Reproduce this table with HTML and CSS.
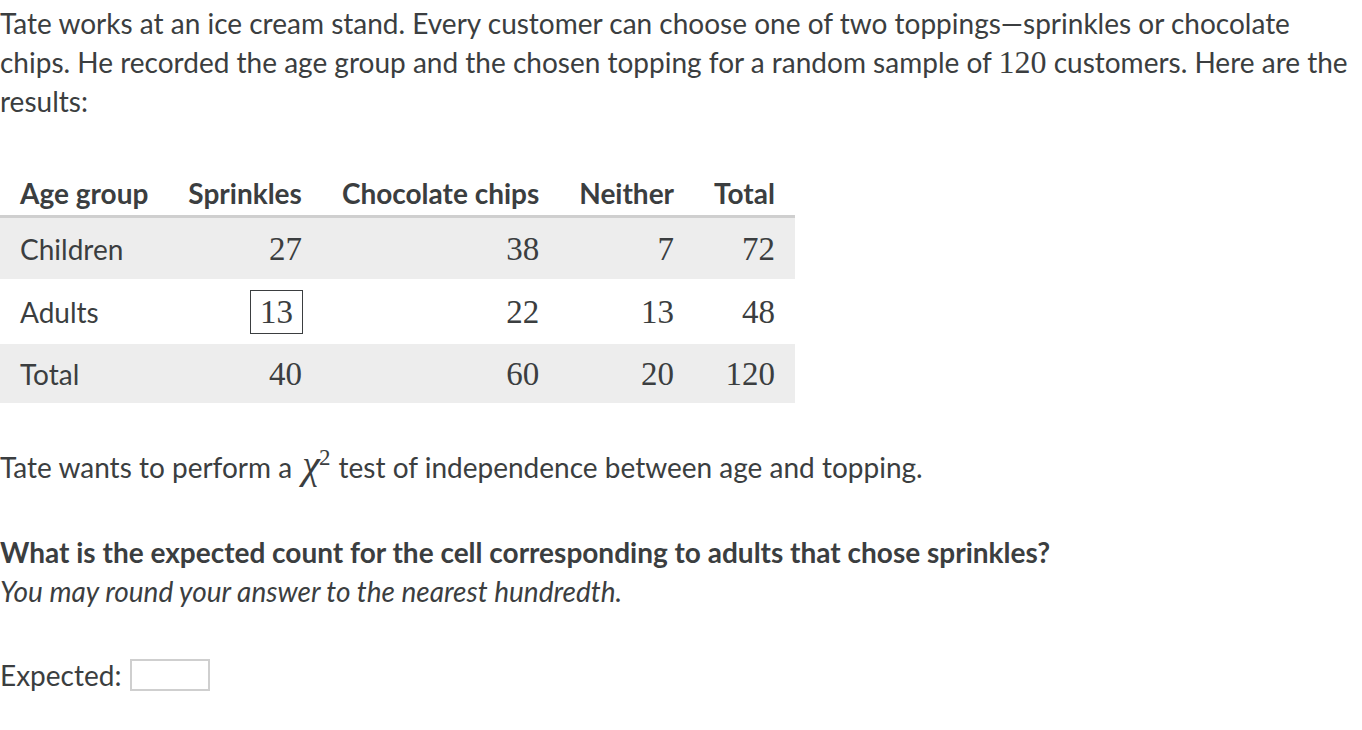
FILE: index.html
```html
<!DOCTYPE html>
<html>
<head>
<meta charset="utf-8">
<link rel="stylesheet" href="styles.css">
</head>
<body>
<div class="page">
  <p class="intro">Tate works at an ice cream stand. Every customer can choose one of two toppings—sprinkles or chocolate chips. He recorded the age group and the chosen topping for a random sample of <span class="num">120</span> customers. Here are the results:</p>
  <table class="data">
    <thead>
      <tr><th class="left">Age group</th><th>Sprinkles</th><th>Chocolate chips</th><th>Neither</th><th>Total</th></tr>
    </thead>
    <tbody>
      <tr class="shade r1"><td class="left">Children</td><td class="num">27</td><td class="num">38</td><td class="num">7</td><td class="num">72</td></tr>
      <tr class="r2"><td class="left">Adults</td><td class="num"><span class="boxed">13</span></td><td class="num">22</td><td class="num">13</td><td class="num">48</td></tr>
      <tr class="shade r3"><td class="left">Total</td><td class="num">40</td><td class="num">60</td><td class="num">20</td><td class="num">120</td></tr>
    </tbody>
  </table>
  <p class="test">Tate wants to perform a <span class="chi"><span class="chi-sym">χ</span><sup class="sq">2</sup></span> test of independence between age and topping.</p>
  <p class="question"><strong>What is the expected count for the cell corresponding to adults that chose sprinkles?</strong><br><em>You may round your answer to the nearest hundredth.</em></p>
  <div class="answer"><label class="label">Expected:</label><input class="field" type="text"></div>
</div>
</body>
</html>
```
FILE: styles.css
```css
html, body { margin: 0; padding: 0; background: #fff; }
body {
  font-family: Lato, "Open Sans", sans-serif;
  font-size: 28px;
  color: #3b3e40;
}
.page { width: 1362px; }
.intro { margin: 0; padding-top: 4px; line-height: 39px; }
.num { font-family: "Liberation Serif", "DejaVu Serif", serif; font-size: 33px; }
.intro .num { font-size: 32px; line-height: 0; }
.data {
  border-collapse: collapse;
  margin-top: 55px;
}
.data th {
  font-weight: 700;
  text-align: right;
  padding: 0 20px 5px 20px;
  line-height: 34px;
  border-bottom: 3px solid #cfcfcf;
  vertical-align: bottom;
}
.data th.left { text-align: left; }
.data td {
  padding: 0 20px;
  text-align: right;
  line-height: 34px;
  vertical-align: middle;
}
.data td.left { text-align: left; }
.data tr.shade td { background: #ededed; }
.data tr.r1 td { height: 61px; }
.data tr.r2 td { height: 65px; }
.data tr.r3 td { height: 59px; }
.boxed {
  display: inline-block;
  border: 1px solid #3b3e40;
  padding: 4px 9px 4px 9px;
  line-height: 34px;
  margin-right: -1px;
}
.test { margin: 45px 0 0 0; line-height: 39px; }
.chi { font-family: "Liberation Serif", "DejaVu Serif", serif; line-height: 0; margin-left: 3px; margin-right: 1px; }
.chi-sym { font-style: italic; font-size: 40px; line-height: 0; }
.sq { font-size: 23px; vertical-align: 0.55em; line-height: 0; margin-left: -1px; }
.question { margin: 46px 0 0 0; line-height: 39px; }
.question strong { font-weight: 700; }
.answer { margin-top: 47px; display: flex; align-items: center; gap: 9px; }
.field {
  box-sizing: border-box;
  width: 80px;
  height: 32px;
  border: 2px solid #cfcfcf;
  padding: 0;
  margin: 0;
  background: #fff;
}
```
